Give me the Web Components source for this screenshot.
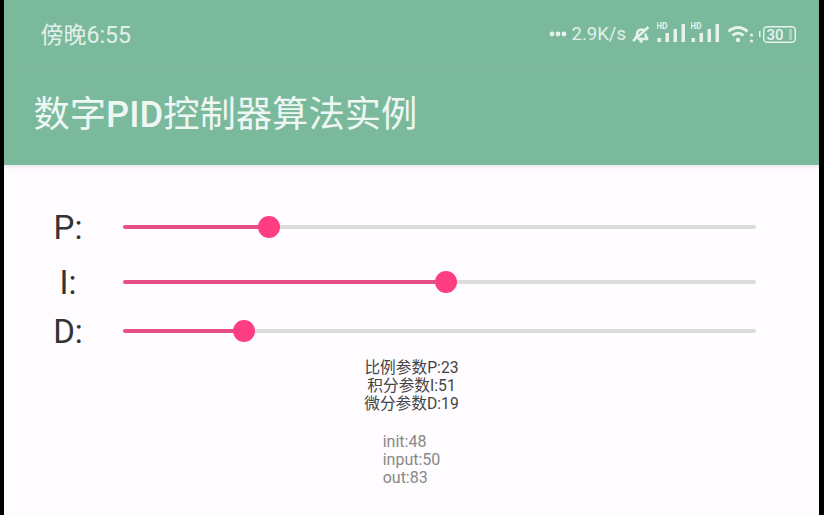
<!DOCTYPE html>
<html lang="zh">
<head>
<meta charset="utf-8">
<title>数字PID控制器算法实例</title>
<style>
  html, body { margin: 0; height: 100%; background: #000; overflow: hidden; }
  body { font-family: Roboto, "Noto Sans CJK SC", sans-serif; }
</style>
</head>
<body>
<app-screen>
  <status-bar time="傍晚6:55" speed="2.9K/s" battery="30"></status-bar>
  <app-bar>数字<b>PID</b>控制器算法实例</app-bar>
  <main-panel>
    <pid-slider label="P:" value="23"></pid-slider>
    <pid-slider label="I:" value="51" style="margin-top:11px"></pid-slider>
    <pid-slider label="D:" value="19" style="margin-top:5px"></pid-slider>
    <pid-readout>
      <span>比例参数P:23</span>
      <span>积分参数I:51</span>
      <span>微分参数D:19</span>
      <span slot="values">init:48</span>
      <span slot="values">input:50</span>
      <span slot="values">out:83</span>
    </pid-readout>
  </main-panel>
</app-screen>

<script>
/** Phone frame: black edges left and right of the recording */
class AppScreen extends HTMLElement {
  constructor() {
    super();
    this.attachShadow({ mode: 'open' });
    this.shadowRoot.innerHTML = `
      <style>
        :host {
          display: flex;
          flex-direction: column;
          height: 515px;
          margin: 0 5px 0 4px;
          background: #fefcfe;
          overflow: hidden;
        }
      </style>
      <slot></slot>
    `;
  }
}

/** Status bar with clock, speed and the indicator icons */
class StatusBar extends HTMLElement {
  constructor() {
    super();
    this.attachShadow({ mode: 'open' });
  }

  connectedCallback() {
    const signal = `
      <svg width="30" height="24" viewBox="0 0 30 24" fill="#e6f3ed">
        <text x="-1" y="7" font-size="8.500" font-weight="700" font-family="Roboto">HD</text>
        <rect x="0.500" y="16" width="3.500" height="4"/>
        <rect x="8.500" y="11" width="3.500" height="9"/>
        <rect x="16.500" y="7" width="3.500" height="13"/>
        <rect x="24.500" y="2" width="3.500" height="18"/>
      </svg>`;
    this.shadowRoot.innerHTML = `
      <style>
        :host {
          display: flex;
          align-items: center;
          height: 68px;
          padding: 0 23px 0 36.500px;
          background: #7bb99c;
          color: #e2f0e9;
          flex: none;
        }
        .time { font-size: 23px; padding-bottom: 3px; }
        .icons { display: flex; align-items: center; margin-left: auto; }
        .speed { font-size: 18.500px; margin: 0 6px 0 5px; }
        svg { display: block; }
      </style>
      <span class="time">${this.getAttribute('time')}</span>
      <div class="icons">
        <svg width="18" height="6" viewBox="0 0 18 6" fill="#e6f3ed">
          <circle cx="3" cy="3" r="2.400"/><circle cx="9" cy="3" r="2.400"/><circle cx="15" cy="3" r="2.400"/>
        </svg>
        <span class="speed">${this.getAttribute('speed')}</span>
        <svg width="18" height="18" viewBox="0 0 18 18" fill="none" stroke="#e6f3ed" stroke-width="2.400">
          <path d="M2.500 14c2-1 2.500-2 2.500-5a4.500 4.500 0 0 1 7.500-3.300M13.500 8.500c0 3 .5 4.500 2.500 5.500H6M7.500 16.500h3M1 16 16.500 2"/>
        </svg>
        <span style="width:7px"></span>
        ${signal}
        <span style="width:4px"></span>
        ${signal}
        <svg style="margin-left:6px" width="27" height="20" viewBox="0 0 27 20" fill="none" stroke="#e6f3ed" stroke-width="3">
          <path d="M1.500 7.500C7 2 15 2 20.500 7.500M5.500 11.500c3.300-3 7.700-3 11 0"/>
          <circle cx="11" cy="16" r="2.200" fill="#e6f3ed" stroke="none"/>
          <circle cx="24.500" cy="11" r="1.600" fill="#e6f3ed" stroke="none"/>
          <circle cx="24.500" cy="17" r="1.600" fill="#e6f3ed" stroke="none"/>
        </svg>
        <svg style="margin-left:5px" width="37" height="20" viewBox="0 0 37 20">
          <rect x="0" y="7" width="1.500" height="6" fill="#e6f3ed"/>
          <rect x="4.700" y="2.700" width="31.600" height="15.600" rx="3.500" fill="none" stroke="#e6f3ed" stroke-width="1.400"/>
          <rect x="30" y="5" width="3" height="11" fill="#a9d3bf"/>
          <text x="7.500" y="15.500" font-size="15" font-weight="500" font-family="Roboto" fill="#e6f3ed">${this.getAttribute('battery')}</text>
        </svg>
      </div>
    `;
  }
}

/** Title bar below the status bar */
class AppBar extends HTMLElement {
  constructor() {
    super();
    this.attachShadow({ mode: 'open' });
    this.shadowRoot.innerHTML = `
      <style>
        :host {
          display: block;
          height: 97px;
          padding-left: 29.500px;
          background: #7bb99c;
          color: #eef7f3;
          font-size: 36.300px;
          line-height: 94px;
          box-shadow: 0 2px 4px rgba(0, 0, 0, .08);
          flex: none;
          white-space: nowrap;
        }
        ::slotted(b) { font-weight: 500; }
      </style>
      <slot></slot>
    `;
  }
}

class MainPanel extends HTMLElement {
  constructor() {
    super();
    this.attachShadow({ mode: 'open' });
    this.shadowRoot.innerHTML = `
      <style>
        :host {
          display: flex;
          flex-direction: column;
          padding: 40px 63px 0 29px;
        }
      </style>
      <slot></slot>
    `;
  }
}

/** Labelled slider, value is 0-100 */
class PidSlider extends HTMLElement {
  constructor() {
    super();
    this.attachShadow({ mode: 'open' });
  }

  connectedCallback() {
    const value = Number(this.getAttribute('value'));
    this.shadowRoot.innerHTML = `
      <style>
        :host {
          display: flex;
          align-items: center;
          height: 44px;
        }
        .label {
          width: 70px;
          margin-right: 20px;
          text-align: center;
          font-size: 33px;
          color: #333;
        }
        .track { flex: 1; display: flex; align-items: center; }
        .fill { height: 4px; background: #e54f88; border-radius: 2px 0 0 2px; }
        .rest { flex: 1; height: 4px; background: #dcdcdc; border-radius: 0 2px 2px 0; }
        .thumb {
          flex: none;
          width: 22px;
          height: 22px;
          margin: 0 -11px;
          border-radius: 50%;
          background: #ff3d81;
          position: relative;
          left: .5px;
        }
      </style>
      <span class="label">${this.getAttribute('label')}</span>
      <div class="track">
        <div class="fill" style="width:${value}%"></div>
        <div class="thumb"></div>
        <div class="rest"></div>
      </div>
    `;
  }
}

/** The parameter lines, centred, and the computed values below them */
class PidReadout extends HTMLElement {
  constructor() {
    super();
    this.attachShadow({ mode: 'open' });
    this.shadowRoot.innerHTML = `
      <style>
        :host {
          display: flex;
          flex-direction: column;
          align-items: center;
          margin: 6px -63px 0 -29px;
          font-size: 15.700px;
          line-height: 18px;
        }
        .params { display: flex; flex-direction: column; align-items: center; color: #444; }
        .values {
          display: flex;
          flex-direction: column;
          align-items: flex-start;
          margin-top: 20px;
          color: #888;
          font-size: 16px;
        }
      </style>
      <div class="params"><slot></slot></div>
      <div class="values"><slot name="values"></slot></div>
    `;
  }
}

customElements.define('app-screen', AppScreen);
customElements.define('status-bar', StatusBar);
customElements.define('app-bar', AppBar);
customElements.define('main-panel', MainPanel);
customElements.define('pid-slider', PidSlider);
customElements.define('pid-readout', PidReadout);
</script>
</body>
</html>
